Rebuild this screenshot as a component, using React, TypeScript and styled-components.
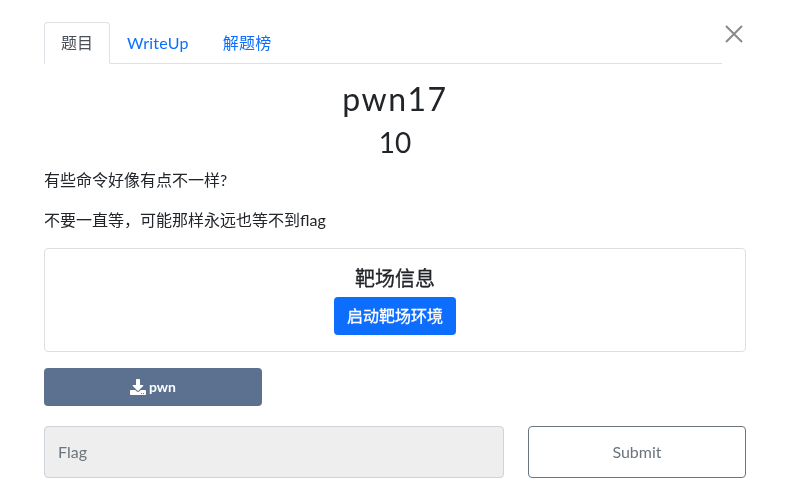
import { useState } from "react";
import styled, { createGlobalStyle } from "styled-components";
import { FaDownload } from "react-icons/fa";

const GlobalStyle = createGlobalStyle`
  * {
    box-sizing: border-box;
  }
  body {
    margin: 0;
    background: #ffffff;
    color: #212529;
    font-family: Lato, "Noto Sans CJK SC", sans-serif;
    font-size: 16px;
    line-height: 24px;
  }
`;

const SPage = styled.div`
  width: 790px;
  height: 497px;
  padding: 22px 44px 0;
  overflow: hidden;
  will-change: transform;
`;
const SHeader = styled.div`
  display: flex;
  align-items: flex-start;
`;
const STabs = styled.ul`
  flex: 1;
  display: flex;
  margin: 0;
  padding: 0;
  list-style: none;
  border-bottom: 1px solid #dee2e6;
`;
const STab = styled.li<{ $active?: boolean }>`
  height: 42px;
  margin-bottom: -1px;
  padding: 8px 16px;
  border: 1px solid ${({ $active }) => ($active ? "#dee2e6" : "transparent")};
  border-bottom-color: ${({ $active }) => ($active ? "#ffffff" : "transparent")};
  border-radius: 4px 4px 0 0;
  color: ${({ $active }) => ($active ? "#495057" : "#0d6efd")};
  letter-spacing: ${({ $active }) => ($active ? "0" : "0.25px")};
  cursor: pointer;
`;
const SClose = styled.button`
  flex: none;
  width: 24px;
  height: 24px;
  padding: 3px;
  border: 0;
  background: none;
  color: #8a8a8a;
  cursor: pointer;
  svg {
    display: block;
  }
`;
const STitle = styled.h1`
  margin: 13px 0 0;
  font-size: 32px;
  font-weight: 400;
  line-height: 43px;
  letter-spacing: 1.5px;
  text-align: center;
`;
const SScore = styled.h2`
  margin: 0 0 4px;
  font-size: 28px;
  font-weight: 400;
  line-height: 44px;
  text-align: center;
`;
const SText = styled.p`
  margin: 0 0 16px;
`;
const SCard = styled.div`
  display: flex;
  flex-direction: column;
  align-items: center;
  height: 104px;
  margin-top: 4px;
  padding: 16px;
  border: 1px solid #dfdfdf;
  border-radius: 4px;
`;
const SCardTitle = styled.h3`
  margin: 0 0 6px;
  font-size: 20px;
  font-weight: 400;
  line-height: 26px;
  -webkit-text-stroke: 0.3px currentColor;
`;
const SStartButton = styled.button`
  height: 38px;
  padding: 0 13px;
  border: 0;
  border-radius: 4px;
  background: #0d6efd;
  color: #ffffff;
  font: 400 16px/24px Lato, "Noto Sans CJK SC", sans-serif;
  -webkit-text-stroke: 0.3px currentColor;
  cursor: pointer;
`;
const SDownload = styled.a`
  display: flex;
  align-items: center;
  justify-content: center;
  gap: 3px;
  width: 218px;
  height: 38px;
  margin-top: 16px;
  border-radius: 4px;
  background: #5c718f;
  color: #ffffff;
  font-size: 14px;
  font-weight: 700;
  text-decoration: none;
  cursor: pointer;
`;
const SForm = styled.form`
  display: flex;
  justify-content: space-between;
  margin-top: 20px;
`;
const SFlagInput = styled.input`
  width: 460px;
  height: 52px;
  padding: 0 13px 2px;
  border: 1px solid #ced4da;
  border-radius: 4px;
  background: #eeeeee;
  color: #495057;
  font: 400 16px Lato, sans-serif;
  outline: none;
  &::placeholder {
    color: #6c757d;
    opacity: 1;
  }
`;
const SSubmit = styled.button`
  width: 218px;
  height: 52px;
  padding: 0 0 2px;
  border: 1px solid #6c757d;
  border-radius: 4px;
  background: #ffffff;
  color: #6c757d;
  font: 400 16px Lato, sans-serif;
  cursor: pointer;
`;

const tabs = ["题目", "WriteUp", "解题榜"];

export default function App() {
  const [flag, setFlag] = useState("");

  return (
    <SPage>
      <GlobalStyle />
      <SHeader>
        <STabs>
          {tabs.map((tab, i) => (
            <STab key={tab} $active={i === 0}>
              {tab}
            </STab>
          ))}
        </STabs>
        <SClose aria-label="Close">
          <svg width="18" height="18" viewBox="0 0 18 18" fill="none" stroke="currentColor" strokeWidth="2">
            <path d="M1 1l16 16M17 1L1 17" />
          </svg>
        </SClose>
      </SHeader>
      <STitle>pwn17</STitle>
      <SScore>10</SScore>
      <SText>有些命令好像有点不一样?</SText>
      <SText>不要一直等，可能那样永远也等不到flag</SText>
      <SCard>
        <SCardTitle>靶场信息</SCardTitle>
        <SStartButton>启动靶场环境</SStartButton>
      </SCard>
      <SDownload>
        <FaDownload size={16} />
        pwn
      </SDownload>
      <SForm onSubmit={event => event.preventDefault()}>
        <SFlagInput placeholder="Flag" value={flag} onChange={event => setFlag(event.target.value)} />
        <SSubmit type="submit">Submit</SSubmit>
      </SForm>
    </SPage>
  );
}
